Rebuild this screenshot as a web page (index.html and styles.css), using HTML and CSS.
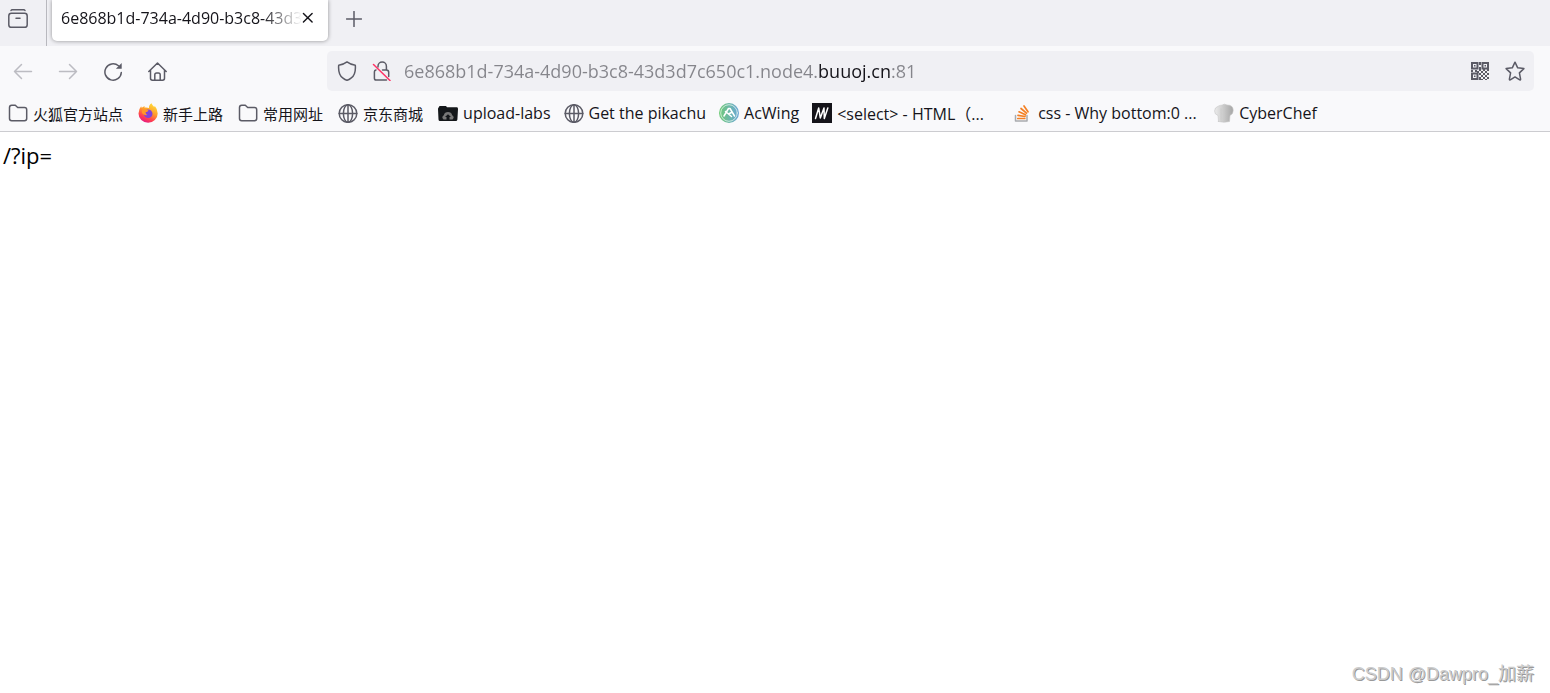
FILE: index.html
```html
<!DOCTYPE html>
<html lang="zh-CN">
  <head>
    <meta charset="utf-8">
    <title>6e868b1d-734a-4d90-b3c8-43d3d7c650c1.node4.buuoj.cn:81</title>
    <link rel="stylesheet" href="styles.css">
  </head>
  <body>
    <header class="browser">
      <div class="tab-bar">
        <button class="icon-btn view-btn" aria-label="Firefox View">
          <svg class="icon" viewBox="0 0 20 20"><path d="M3 1.5Q3.4.7 4.4.7h11.2q1 0 1.4.8"/><rect x=".8" y="4.3" width="18.4" height="14" rx="2.6"/><path d="M8 9.3h4"/></svg>
        </button>
        <div class="tab">
          <span class="tab-title">6e868b1d-734a-4d90-b3c8-43d3</span>
          <button class="icon-btn close-btn" aria-label="关闭标签页">
            <svg viewBox="0 0 12 12"><path d="M1.500 1.500l9 9M10.500 1.500l-9 9"/></svg>
          </button>
        </div>
        <button class="icon-btn new-btn" aria-label="新建标签页">
          <svg viewBox="0 0 16 16"><path d="M8 .5v15M.5 8h15"/></svg>
        </button>
      </div>

      <div class="nav-bar">
        <div class="nav-btns">
          <button class="icon-btn" aria-label="后退" disabled>
            <svg class="icon" viewBox="0 0 20 20"><path d="M18.500 10.500h-17M8.500 3.500l-7 7 7 7"/></svg>
          </button>
          <button class="icon-btn" aria-label="前进" disabled>
            <svg class="icon" viewBox="0 0 20 20"><path d="M1.500 10.500h17M11.500 3.500l7 7-7 7"/></svg>
          </button>
          <button class="icon-btn" aria-label="刷新">
            <svg class="icon" viewBox="0 0 20 20"><path d="M18.300 11.500A8.200 8.200 0 1 1 15.500 4.800"/><path class="solid" d="M18.700 2v5.800h-5.800z"/></svg>
          </button>
          <button class="icon-btn" aria-label="主页">
            <svg class="icon" viewBox="0 0 20 20"><path d="M.8 10.500L9.500 2l8.700 8.500M2.500 9v8.300q0 1.900 1.900 1.900h10.200q1.900 0 1.900-1.900V9M6.800 19v-5.200q0-1.800 1.800-1.800h1.800q1.800 0 1.800 1.800V19"/></svg>
          </button>
        </div>
        <div class="url-bar">
          <button class="icon-btn" aria-label="跟踪保护">
            <svg class="icon" viewBox="0 0 20 20"><path d="M10 .9q4 3 8.300 3.300.8 9.400-4.300 13-2 1.600-4 2.100-2-.5-4-2.100-5.100-3.600-4.300-13Q6 3.900 10 .9z"/></svg>
          </button>
          <button class="icon-btn" aria-label="连接不安全">
            <svg class="icon" viewBox="0 0 20 20"><path d="M6 6V5.200a4.200 4.200 0 0 1 8.400 0V9q2.300.2 2.300 2.200v4.300M14.500 19H4.200q-1.800 0-1.800-1.800v-6.400q0-1.600 1.600-1.900M10.500 9h4"/><path class="strike" d="M1.500 3.500l16.500 16"/></svg>
          </button>
          <input class="url-input" type="text" aria-label="地址" value="6e868b1d-734a-4d90-b3c8-43d3d7c650c1.node4.buuoj.cn:81">
          <button class="icon-btn" aria-label="二维码">
            <svg class="icon qr" viewBox="0 0 20 20"><path d="M2 2h5.500v5.500H2zM12.500 2H18v5.500h-5.500zM2 12.500h5.500V18H2z"/><path class="solid" d="M4 4h1.500v1.500H4zM14.500 4H16v1.500h-1.500zM4 14.500h1.500V16H4zM9 1h2v3H9zM9 6h2v2H9zM1 9h2v2H1zM5 9h2v2H5zM7 10h2v2H7zM9 8h2v2H9zM11 10h2v2h-2zM13 8h2v2h-2zM15 10h2v2h-2zM17 8h2v2h-2zM9 12h2v2H9zM13 12h2v2h-2zM17 12h2v2h-2zM11 14h2v2h-2zM15 14h2v2h-2zM9 16h2v3H9zM13 16h2v2h-2zM17 16h2v2h-2zM11 18h2v1h-2zM15 18h2v1h-2z"/></svg>
          </button>
          <button class="icon-btn" aria-label="添加书签">
            <svg class="icon" viewBox="0 0 20 20"><path d="M10 1.200l2.700 5.600 6.200.8-4.500 4.300 1.200 6.300q0 .9-.9.600L10 15.900l-4.700 2.900q-.9.300-.9-.6l1.200-6.300L1.100 7.600l6.200-.8z"/></svg>
          </button>
        </div>
      </div>

      <nav class="bookmarks">
        <a class="bookmark cjk" href="#">
          <svg class="icon" viewBox="0 0 20 20"><path d="M1.500 15.500v-11q0-2.300 2.200-2.300h3.600l2.400 2.300h6.800q2.200 0 2.200 2.200v8.800q0 2.200-2.200 2.200H3.700q-2.200 0-2.200-2.200z"/></svg>
          <span>火狐官方站点</span>
        </a>
        <a class="bookmark cjk" href="#">
          <svg class="icon" viewBox="0 0 20 20">
            <defs>
              <linearGradient id="fox" x1=".8" y1="0" x2=".3" y2="1"><stop offset="0" stop-color="#ffe33c"/><stop offset=".45" stop-color="#ff9a2a"/><stop offset=".75" stop-color="#ff4050"/><stop offset="1" stop-color="#e31587"/></linearGradient>
            </defs>
            <path fill="url(#fox)" stroke="none" d="M13.500.3q1 2.600 2.700 3.600.6-.4.500-1.200 3 3.500 3 7.800a9.600 9.300 0 0 1-19.200 0Q.5 6 3.200 3.200q.1 1.100.7 1.600Q5 3.500 7 3.200q-.6.700-.7 1.400 2.400-.6 4.700.4Q10.500 2.400 13.500.3z"/>
            <circle cx="10.200" cy="10.700" r="4.300" fill="#8142d8" stroke="none"/>
            <path fill="#ff9828" stroke="none" d="M4 6.500q4-1.500 6.500 1-.8 1.600-3 1.800.2 2 1.800 2.800-3.800.6-5.300-2z"/>
          </svg>
          <span>新手上路</span>
        </a>
        <a class="bookmark cjk" href="#">
          <svg class="icon" viewBox="0 0 20 20"><path d="M1.500 15.500v-11q0-2.300 2.200-2.300h3.600l2.400 2.300h6.800q2.200 0 2.200 2.200v8.800q0 2.200-2.200 2.200H3.700q-2.200 0-2.200-2.200z"/></svg>
          <span>常用网址</span>
        </a>
        <a class="bookmark cjk" href="#">
          <svg class="icon" viewBox="0 0 20 20"><circle cx="10" cy="10.500" r="8.800"/><ellipse cx="10" cy="10.500" rx="4.600" ry="8.800"/><path d="M10 1.700v17.600M1.200 10.500h17.600"/></svg>
          <span>京东商城</span>
        </a>
        <a class="bookmark" href="#">
          <svg class="icon" viewBox="0 0 20 20"><path fill="#14171a" stroke="none" d="M0 6q0-1.500 1-1.700L1.400 3H8l1 1.200h10q1 .2 1 1.800l-.6 10.500q-.2 1.500-1.500 1.500H2Q.6 18 .5 16.500z"/><path fill="#777" stroke="none" d="M5.500 16.500q-2.500-2.500.3-4.300.8-3.200 4.200-3.200t4.200 3.200q2.800 1.800.3 4.300h-3V14h1.500L10 11.200 7 14h1.500v2.500z"/></svg>
          <span>upload-labs</span>
        </a>
        <a class="bookmark" href="#">
          <svg class="icon" viewBox="0 0 20 20"><circle cx="10" cy="10.500" r="8.800"/><ellipse cx="10" cy="10.500" rx="4.600" ry="8.800"/><path d="M10 1.700v17.600M1.200 10.500h17.600"/></svg>
          <span>Get the pikachu</span>
        </a>
        <a class="bookmark" href="#">
          <svg class="icon" viewBox="0 0 20 20">
            <defs>
              <linearGradient id="acwing"><stop offset="0" stop-color="#6fcb76"/><stop offset="1" stop-color="#6aa5d8"/></linearGradient>
            </defs>
            <circle cx="10" cy="10" r="10" fill="url(#acwing)" stroke="none"/>
            <circle cx="10" cy="10" r="8.300" fill="none" stroke="#e4f4ec" stroke-width=".8"/>
            <path stroke="#fff" stroke-width="1.500" d="M5 13l4.500-7.500h1.500l4.500 7.500M6.500 8.500l3 2.500 3-1.500M9.500 11l3 2.500"/>
          </svg>
          <span>AcWing</span>
        </a>
        <a class="bookmark long" href="#">
          <svg class="icon" viewBox="0 0 20 20"><path fill="#15141a" stroke="none" d="M0 0h20v20H0z"/><path stroke="#fff" d="M3.500 15.500L6.700 5l1.600 10L12 5l.3 10.500L15.800 5"/></svg>
          <span>&lt;select&gt; - HTML（...</span>
        </a>
        <a class="bookmark long" href="#">
          <svg class="icon" viewBox="0 0 20 20"><path stroke="#a9abae" d="M2.500 12.500v5.500h11.500v-5.500"/><path stroke="#f48024" stroke-width="1.700" d="M4.800 15.500h7M5 12.300l7 1.200M6 8.800l6.500 3M8 5.500l5.500 4.600M11 3l4 5.800"/></svg>
          <span>css - Why bottom:0 ...</span>
        </a>
        <a class="bookmark" href="#">
          <svg class="icon" viewBox="0 0 20 20">
            <defs>
              <linearGradient id="chef"><stop offset="0" stop-color="#ececec"/><stop offset="1" stop-color="#a5a5a5"/></linearGradient>
            </defs>
            <path fill="url(#chef)" stroke="#c6c6c6" stroke-width=".6" d="M4.500 18.500L4 12.500Q.6 11.500.6 8q0-3.600 3.600-4.800Q6.500 2 8 2.200 10 .2 13 2q6 0 6.200 5 .2 4-3.200 5.500l-.5 6Q10 20 4.500 18.500z"/>
            <path stroke="#c9c9c9" stroke-width=".8" d="M7 6v11M10 5v12"/>
          </svg>
          <span>CyberChef</span>
        </a>
      </nav>
    </header>

    <main class="page">/?ip=</main>

    <footer class="watermark">CSDN @Dawpro_加薪</footer>
  </body>
</html>
```
FILE: styles.css
```css
* {
  box-sizing: border-box;
}

body {
  display: flex;
  flex-direction: column;
  min-height: 100vh;
  margin: 0;
  background-color: #fff;
  color: #15141a;
  font-family: "Open Sans", "Noto Sans CJK SC", sans-serif;
  font-size: 16px;
}

svg {
  display: block;
  flex: none;
  fill: none;
  stroke: currentColor;
  stroke-width: 1.5;
  stroke-linecap: round;
  stroke-linejoin: round;
}

.icon {
  width: 20px;
  height: 20px;
}

.icon .solid {
  fill: currentColor;
  stroke: none;
}

.icon .strike {
  stroke: #ff3366;
}

.icon-btn {
  padding: 0;
  border: 0;
  background: none;
  color: #5b5b66;
}

.icon-btn:disabled {
  color: #bcbcc2;
}

/* 标签栏 */
.tab-bar {
  display: flex;
  height: 46px;
  background-color: #f0f0f4;
}

.view-btn {
  width: 47px;
  padding: 0 0 8px 8px;
  border-right: 1px solid #b8b8be;
}

.tab {
  display: flex;
  align-items: center;
  width: 276px;
  height: 41px;
  margin: 0 18px 0 5px;
  padding: 0 14px 5px 9px;
  border-radius: 0 0 5px 5px;
  background-color: #fff;
  box-shadow: 0 0 4px rgba(0, 0, 0, .4);
}

.tab-title {
  flex: 1;
  white-space: nowrap;
  -webkit-mask-image: linear-gradient(to left, transparent, #000 40px);
  mask-image: linear-gradient(to left, transparent, #000 40px);
}

.close-btn {
  width: 12px;
  color: #15141a;
}

.new-btn {
  width: 16px;
  padding-bottom: 8px;
}

/* 导航栏 */
.nav-bar {
  display: flex;
  align-items: center;
  padding: 5px 16px 5px 13px;
  background-color: #f9f9fb;
}

.nav-btns {
  display: flex;
  gap: 25px;
  width: 314px;
}

.url-bar {
  display: flex;
  flex: 1;
  align-items: center;
  gap: 15px;
  height: 40px;
  padding: 0 9px 0 10px;
  border-radius: 5px;
  background-color: #f0f0f4;
}

/* 域名部分用深色显示 */
.url-input {
  flex: 1;
  min-width: 0;
  height: 40px;
  margin-left: -3px;
  padding: 0;
  border: 0;
  outline: 0;
  background: linear-gradient(to right, #85858b 414px, #15141a 414px, #15141a 486px, #85858b 486px);
  -webkit-background-clip: text;
  background-clip: text;
  color: transparent;
  font-family: inherit;
  font-size: 18px;
}

.qr {
  stroke-width: 2;
  stroke-linejoin: miter;
}

/* 书签栏 */
.bookmarks {
  display: flex;
  gap: 13px;
  height: 36px;
  padding: 0 8px 1px;
  border-bottom: 1px solid #ccccd0;
  background-color: #f9f9fb;
  overflow: hidden;
}

.bookmark {
  display: flex;
  flex: none;
  align-items: center;
  gap: 5px;
  color: #15141a;
  text-decoration: none;
  white-space: nowrap;
}

.bookmark.cjk {
  padding-right: 2px;
  font-size: 15px;
}

.bookmark .icon {
  color: #5b5b66;
}

.bookmark.long {
  width: 188px;
}

.page {
  flex: 1;
  padding: 7px 3px;
  color: #000;
  font-size: 22px;
  line-height: 32px;
}

.watermark {
  padding: 0 16px 5px;
  color: #ccc;
  font-family: "Liberation Sans", "Noto Sans CJK SC", sans-serif;
  font-size: 18px;
  line-height: 27px;
  text-align: right;
  text-shadow: 1px 1px 0 #999;
}
```
